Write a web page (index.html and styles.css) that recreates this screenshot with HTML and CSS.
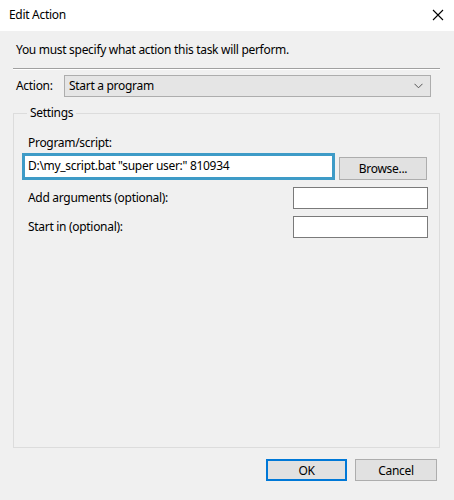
FILE: index.html
```html
<!DOCTYPE html>
<html lang="en">

<head>
    <meta charset="UTF-8">
    <meta name="viewport" content="width=device-width, initial-scale=1.0">
    <title>Edit Action</title>
    <link rel="stylesheet" href="styles.css">
</head>

<body>
    <div class="dialog">
        <!-- title bar -->
        <div class="titlebar">
            <span class="title">Edit Action</span>
            <svg class="close" width="12" height="12" viewBox="0 0 12 12">
                <path d="M1 1 L11 11 M11 1 L1 11" stroke="#000" stroke-width="1.1" fill="none" />
            </svg>
        </div>

        <div class="main">
            <div class="intro">You must specify what action this task will perform.</div>
            <div class="sep"></div>

            <div class="action-row">
                <label class="action-label">Action:</label>
                <div class="select">
                    <span>Start a program</span>
                    <svg width="9" height="6" viewBox="0 0 9 6">
                        <path d="M0.5 0.8 L4.5 4.8 L8.5 0.8" stroke="#555" stroke-width="1" fill="none" />
                    </svg>
                </div>
            </div>

            <fieldset class="settings">
                <legend>Settings</legend>
                <div class="field-label">Program/script:</div>
                <div class="program-row">
                    <div class="input focused">D:\my_script.bat "super user:" 810934</div>
                    <button class="btn browse">Browse...</button>
                </div>
                <div class="row">
                    <span class="field-label">Add arguments (optional):</span>
                    <div class="input small"></div>
                </div>
                <div class="row">
                    <span class="field-label">Start in (optional):</span>
                    <div class="input small"></div>
                </div>
            </fieldset>
        </div>

        <div class="buttons">
            <button class="btn ok">OK</button>
            <button class="btn">Cancel</button>
        </div>
    </div>
</body>

</html>
```

FILE: styles.css
```css
* {
    margin: 0;
    padding: 0;
    box-sizing: border-box;
}

body {
    font-family: "Noto Sans", "Open Sans", sans-serif;
    font-size: 12px;
    line-height: 16px;
    letter-spacing: -0.3px;
    color: #000;
}

.dialog {
    width: 454px;
    height: 500px;
    background-color: #f0f0f0;
}

.titlebar {
    height: 31px;
    background-color: #fff;
    display: flex;
    align-items: center;
    justify-content: space-between;
    padding: 0 10px 2px 9px;
}

.title {
    font-size: 12px;
}

.main {
    padding-left: 13px;
    width: 440px;
}

.intro {
    margin-top: 11px;
    padding-left: 3px;
}

.sep {
    margin-top: 10px;
    border-top: 1px solid #a0a0a0;
    border-bottom: 1px solid #fff;
}

.action-row {
    display: flex;
    align-items: center;
    margin-top: 5px;
}

.action-label {
    width: 51px;
    padding-left: 3px;
}

.select {
    width: 367px;
    height: 22px;
    background-color: #e5e5e5;
    border: 1px solid #adadad;
    display: flex;
    align-items: center;
    justify-content: space-between;
    padding: 0 7px 0 4px;
}

.settings {
    margin-top: 7px;
    height: 344px;
    border: 1px solid #dcdcdc;
    padding: 0 11px 0 8px;
}

.settings legend {
    margin-left: 5px;
    padding: 0 3px;
    line-height: 18px;
}

.field-label {
    padding-left: 6px;
}

.settings > .field-label {
    margin-top: 13px;
}

.program-row {
    display: flex;
    align-items: flex-end;
    margin-top: 2px;
}

.input {
    background-color: #fff;
    border: 1px solid #7a7a7a;
    height: 22px;
}

.input.focused {
    width: 313px;
    height: 27px;
    border: 3px solid #3e9bc7;
    padding: 2px 3px;
    white-space: nowrap;
    overflow: hidden;
}

.input.small {
    width: 135px;
}

.row {
    display: flex;
    align-items: center;
    justify-content: space-between;
    margin-top: 7px;
}

.btn {
    font-family: inherit;
    font-size: 12px;
    letter-spacing: inherit;
    color: #000;
    height: 22px;
    width: 82px;
    background-color: #e1e1e1;
    border: 1px solid #adadad;
}

.browse {
    width: 88px;
    height: 23px;
    margin-left: 4px;
}

.ok {
    width: 81px;
    border: 2px solid #0078d7;
}

.buttons {
    display: flex;
    justify-content: flex-end;
    gap: 8px;
    margin-top: 11px;
    padding-right: 17px;
}
```
